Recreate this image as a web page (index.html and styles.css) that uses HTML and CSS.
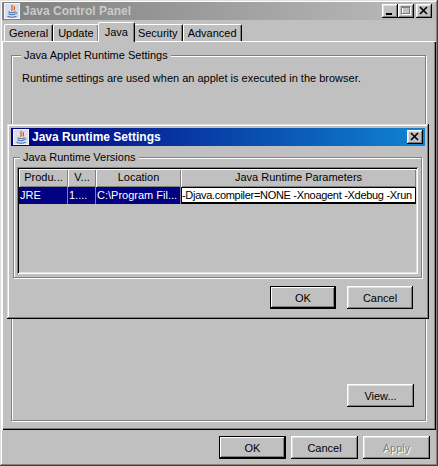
FILE: index.html
```html
<!DOCTYPE html>
<html>
<head>
<meta charset="utf-8">
<link rel="stylesheet" href="styles.css">
</head>
<body>
<div class="win">
  <div class="titlebar inactive">
    <svg class="ico" viewBox="0 0 16 16" width="16" height="16">
      <rect x="0.5" y="0.5" width="15" height="15" fill="#d9dfea" stroke="#f2f4f8"/>
      <path d="M8.5 2 C6.5 4 9.5 5 7.5 7.8 M10.5 3 C9.5 4.5 11.5 5.2 9.8 7.5" stroke="#e0501a" fill="none" stroke-width="1.2"/>
      <path d="M4.5 8.8 Q8 10.6 11.5 8.8 M4.5 10.8 Q8 12.6 11.5 10.8 M3.5 13.2 Q8 15.2 12.5 13.2" stroke="#3f6fb0" fill="none" stroke-width="1.1"/>
      <path d="M11.5 9 Q13.5 9.5 12 11" stroke="#3f6fb0" fill="none" stroke-width="1"/>
    </svg>
    <span class="title-text">Java Control Panel</span>
    <span class="tbtn">
      <svg width="16" height="14" viewBox="0 0 16 14"><rect x="4" y="9" width="6" height="2" fill="#000"/></svg>
    </span>
    <span class="tbtn">
      <svg width="16" height="14" viewBox="0 0 16 14">
        <rect x="4.5" y="3.5" width="8" height="7" fill="none" stroke="#fff"/>
        <rect x="3.5" y="2.5" width="8" height="7" fill="none" stroke="#808080"/>
        <rect x="3" y="3" width="9" height="1" fill="#808080"/>
      </svg>
    </span>
    <span class="tbtn close">
      <svg width="16" height="14" viewBox="0 0 16 14"><path d="M4 3 L11 10 M11 3 L4 10" stroke="#000" stroke-width="1.6" fill="none"/></svg>
    </span>
  </div>

  <div class="tabs">
    <div class="tab">General</div>
    <div class="tab">Update</div>
    <div class="tab sel">Java</div>
    <div class="tab">Security</div>
    <div class="tab">Advanced</div>
  </div>

  <div class="panel">
    <div class="group main-group">
      <span class="legend">Java Applet Runtime Settings</span>
      <p class="desc">Runtime settings are used when an applet is executed in the browser.</p>
      <div class="view-row"><button class="btn">View...</button></div>
    </div>
  </div>

  <div class="footer">
    <button class="btn default">OK</button>
    <button class="btn">Cancel</button>
    <button class="btn disabled">Apply</button>
  </div>

  <div class="dialog">
    <div class="titlebar active">
      <svg class="ico" viewBox="0 0 16 16" width="16" height="16">
        <rect x="0.5" y="0.5" width="15" height="15" fill="#d9dfea" stroke="#f2f4f8"/>
        <path d="M8.5 2 C6.5 4 9.5 5 7.5 7.8 M10.5 3 C9.5 4.5 11.5 5.2 9.8 7.5" stroke="#e0501a" fill="none" stroke-width="1.2"/>
        <path d="M4.5 8.8 Q8 10.6 11.5 8.8 M4.5 10.8 Q8 12.6 11.5 10.8 M3.5 13.2 Q8 15.2 12.5 13.2" stroke="#3f6fb0" fill="none" stroke-width="1.1"/>
        <path d="M11.5 9 Q13.5 9.5 12 11" stroke="#3f6fb0" fill="none" stroke-width="1"/>
      </svg>
      <span class="title-text">Java Runtime Settings</span>
      <span class="tbtn close">
        <svg width="16" height="14" viewBox="0 0 16 14"><path d="M4 3 L11 10 M11 3 L4 10" stroke="#000" stroke-width="1.6" fill="none"/></svg>
      </span>
    </div>
    <div class="group dlg-group">
      <span class="legend">Java Runtime Versions</span>
      <div class="scroll">
        <div class="thead">
          <div class="th c1">Produ...</div>
          <div class="th c2">V...</div>
          <div class="th c3">Location</div>
          <div class="th c4">Java Runtime Parameters</div>
        </div>
        <div class="trow">
          <div class="td c1">JRE</div>
          <div class="td c2">1....</div>
          <div class="td c3">C:\Program Fil...</div>
          <div class="td c4 edit"><span class="edit-text">-Djava.compiler=NONE -Xnoagent -Xdebug -Xrun</span></div>
        </div>
      </div>
    </div>
    <div class="dlg-buttons">
      <button class="btn default">OK</button>
      <button class="btn">Cancel</button>
    </div>
  </div>
</div>
</body>
</html>
```

FILE: styles.css
```css
* { box-sizing: border-box; }
html, body { margin: 0; padding: 0; }
body {
  background: #c0c0c0;
  font-family: "Liberation Sans", Arial, sans-serif;
  font-size: 11px;
  color: #000;
  width: 438px;
  height: 466px;
  overflow: hidden;
}
.win {
  position: relative;
  width: 438px;
  height: 466px;
  padding: 2px;
  background: #c0c0c0;
  box-shadow: inset -1px -1px #404040, inset 1px 1px #dfdfdf, inset -2px -2px #808080, inset 2px 2px #fff;
  display: flex;
  flex-direction: column;
}
.titlebar {
  height: 18px;
  flex: none;
  display: flex;
  align-items: center;
  padding: 0 4px 0 2px;
}
.titlebar.inactive { background: linear-gradient(to right, #808080, #bcbcbc); color: #cacaca; }
.titlebar.active { background: linear-gradient(to right, #000080, #1084d0); color: #fff; }
.ico { flex: none; margin-right: 3px; }
.title-text { flex: 1; font-weight: bold; font-size: 12px; white-space: nowrap; }
.tbtn {
  width: 16px;
  height: 14px;
  flex: none;
  background: #c0c0c0;
  box-shadow: inset -1px -1px #000, inset 1px 1px #fff, inset -2px -2px #808080, inset 2px 2px #dfdfdf;
  display: block;
}
.tbtn svg { display: block; }
.tbtn.close { margin-left: 2px; }

.tabs {
  height: 19px;
  margin-top: 2px;
  padding-left: 2px;
  display: flex;
  align-items: flex-end;
  position: relative;
  z-index: 1;
  flex: none;
}
.tab {
  height: 17px;
  padding: 0 4px 0 4px;
  line-height: 16px;
  background: #c0c0c0;
  border-top: 1px solid #fff;
  border-left: 1px solid #fff;
  border-right: 1px solid #000;
  box-shadow: inset -1px 0 #808080;
  border-radius: 2px 2px 0 0;
  white-space: nowrap;
}
.tab.sel {
  height: 20px;
  margin: 0 -2px -1px -1px;
  padding: 0 6px 0 6px;
  line-height: 18px;
  position: relative;
}

.panel {
  flex: none;
  height: 389px;
  padding: 14px 10px 9px 9px;
  display: flex;
  flex-direction: column;
  box-shadow: inset 1px 1px #fff, inset -1px -1px #000, inset -2px -2px #808080;
}
.group {
  border: 1px solid #808080;
  box-shadow: inset 1px 1px #fff, 1px 1px #fff;
  display: flex;
  flex-direction: column;
}
.legend {
  align-self: flex-start;
  margin-top: -7px;
  padding: 0 3px;
  background: #c0c0c0;
  height: 13px;
  line-height: 13px;
  white-space: nowrap;
}
.main-group { flex: 1; }
.main-group .legend { margin-left: 9px; }
.desc { margin: 10px 0 0 10px; line-height: 13px; white-space: nowrap; }
.view-row {
  margin-top: auto;
  display: flex;
  justify-content: flex-end;
  padding: 0 11px 13px 0;
}

.btn {
  width: 67px;
  height: 23px;
  padding: 0;
  border: 0;
  font: inherit;
  color: #000;
  background: #c0c0c0;
  box-shadow: inset -1px -1px #000, inset 1px 1px #fff, inset -2px -2px #808080, inset 2px 2px #dfdfdf;
}
.btn.default {
  box-shadow: inset 0 0 0 1px #000, inset -2px -2px #000, inset 2px 2px #fff, inset -3px -3px #808080;
}
.btn.disabled { color: #808080; text-shadow: 1px 1px #fff; }

.footer {
  flex: none;
  margin-top: 6px;
  padding-right: 6px;
  display: flex;
  justify-content: flex-end;
  gap: 5px;
}

.dialog {
  position: absolute;
  left: 7px;
  top: 124px;
  width: 422px;
  height: 195px;
  padding: 4px;
  background: #c0c0c0;
  box-shadow: inset -1px -1px #000, inset 1px 1px #dfdfdf, inset -2px -2px #808080, inset 2px 2px #fff;
  display: flex;
  flex-direction: column;
  z-index: 2;
}
.dialog .titlebar { padding: 0 2px 0 2px; }
.dlg-group {
  margin: 11px 3px 0 2px;
  flex: none;
}
.dlg-group .legend { margin-left: 6px; }
.scroll {
  margin: 3px 3px 3px 3px;
  height: 107px;
  padding: 2px;
  box-shadow: inset 1px 1px #808080, inset -1px -1px #fff, inset 2px 2px #000, inset -2px -2px #dfdfdf;
}
.thead, .trow { display: flex; }
.th {
  height: 18px;
  line-height: 17px;
  text-align: center;
  white-space: nowrap;
  overflow: hidden;
  box-shadow: inset 1px 1px #fff, inset -1px -1px #808080;
}
.c1 { width: 49px; }
.c2 { width: 28px; }
.c3 { width: 85px; }
.c4 { width: 235px; }
.trow { height: 17px; background: #000080; }
.td {
  color: #fff;
  line-height: 16px;
  white-space: nowrap;
  overflow: hidden;
  padding-left: 1px;
  border-right: 1px solid #8080a0;
}
.td.edit {
  background: #fff;
  color: #000;
  border: 1px solid #000;
  border-bottom-width: 2px;
  padding-left: 0;
  line-height: 14px;
}
.edit-text { letter-spacing: -0.3px; }
.dlg-buttons {
  margin-top: 8px;
  padding-right: 12px;
  display: flex;
  justify-content: flex-end;
  gap: 11px;
}
.dlg-buttons .btn { width: 66px; }
```
